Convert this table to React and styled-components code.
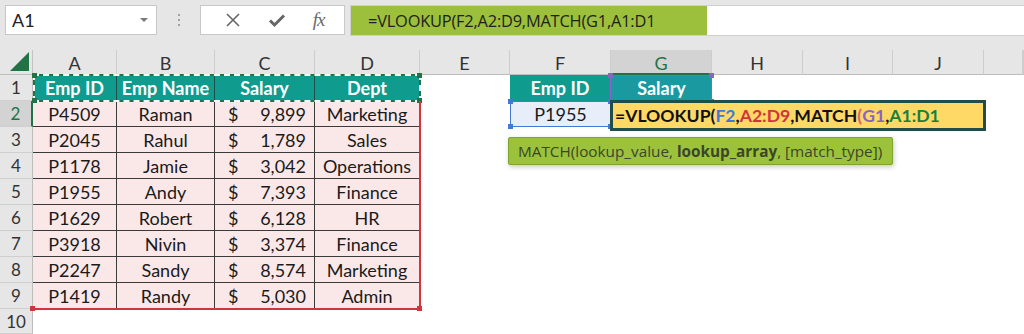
import React from 'react';
import styled, { createGlobalStyle } from 'styled-components';

const GlobalStyle = createGlobalStyle`
  html, body { margin: 0; padding: 0; background: #fff; }
  body { font-family: Lato, "Liberation Sans", sans-serif; overflow: hidden; }
  * { box-sizing: border-box; }
`;

const COLS = [33, 84, 98, 100, 105, 90, 101, 101, 91, 90, 91];
const LETTERS = ['A', 'B', 'C', 'D', 'E', 'F', 'G', 'H', 'I', 'J', ''];
const ACTIVE_COL = 'G';
const ACTIVE_ROW = 2;

const employees = [
  ['P4509', 'Raman', '9,899', 'Marketing'],
  ['P2045', 'Rahul', '1,789', 'Sales'],
  ['P1178', 'Jamie', '3,042', 'Operations'],
  ['P1955', 'Andy', '7,393', 'Finance'],
  ['P1629', 'Robert', '6,128', 'HR'],
  ['P3918', 'Nivin', '3,374', 'Finance'],
  ['P2247', 'Sandy', '8,574', 'Marketing'],
  ['P1419', 'Randy', '5,030', 'Admin'],
];

const Page = styled.div`
  width: 1024px;
  height: 334px;
  overflow: hidden;
  background: #fff;
`;

/* ---------- formula toolbar ---------- */
const Toolbar = styled.div`
  height: 50px;
  padding: 5px 0 0 5px;
  display: flex;
  align-items: flex-start;
  background: #e6e6e6;
`;

const NameBox = styled.div`
  width: 152px;
  height: 30px;
  background: #fff;
  border: 1px solid #c8c8c8;
  display: flex;
  align-items: center;
  justify-content: space-between;
  padding: 0 8px 0 6px;
  font-size: 18px;
  color: #222;
`;

const Caret = styled.span`
  width: 0;
  height: 0;
  border-left: 4px solid transparent;
  border-right: 4px solid transparent;
  border-top: 4px solid #7a7a7a;
`;

const Grip = styled.div`
  width: 43px;
  height: 30px;
  display: flex;
  flex-direction: column;
  align-items: center;
  justify-content: center;
  gap: 3px;
`;

const Dot = styled.span`
  width: 2px;
  height: 2px;
  background: #a0a0a0;
`;

const ButtonBox = styled.div`
  width: 145px;
  height: 30px;
  background: #fff;
  border: 1px solid #c8c8c8;
  display: flex;
  align-items: center;
  justify-content: space-around;
  padding: 0 6px 0 10px;
  margin-right: 5px;
`;

const Fx = styled.span`
  font-family: "Liberation Serif", "DejaVu Serif", serif;
  font-style: italic;
  font-size: 19px;
  color: #6a6a6a;
  letter-spacing: -1px;
`;

const FormulaBar = styled.div`
  flex: 1;
  height: 31px;
  background: #fff;
  border: 1px solid #cfcfcf;
  border-right: none;
  display: flex;
`;

const FormulaText = styled.div`
  width: 356px;
  height: 100%;
  background: #9cbf3c;
  padding-left: 17px;
  display: flex;
  align-items: center;
  font-family: "Open Sans", "Noto Sans", sans-serif;
  font-size: 16.4px;
  color: #1e1e1e;
  white-space: nowrap;
  letter-spacing: -0.2px;
`;

/* ---------- sheet grid ---------- */
const Sheet = styled.div`
  display: grid;
  grid-template-columns: ${COLS.map((w) => `${w}px`).join(' ')} 1fr;
  grid-template-rows: 25px repeat(9, 26px) 1fr;
  height: 284px;
  font-size: 18px;
`;

const Corner = styled.div`
  grid-row: 1;
  grid-column: 1;
  background: #e6e6e6;
  border-right: 1px solid #c4c4c4;
  border-bottom: 1px solid #bdbdbd;
  position: relative;
  &::after {
    content: '';
    position: absolute;
    right: 3px;
    bottom: 3px;
    width: 0;
    height: 0;
    border-left: 19px solid transparent;
    border-bottom: 19px solid #217346;
  }
`;

const ColHead = styled.div`
  grid-row: 1;
  grid-column: ${(p) => p.$c};
  background: ${(p) => (p.$active ? '#d3d3d3' : '#e6e6e6')};
  color: ${(p) => (p.$active ? '#217346' : '#333')};
  border-right: 1px solid #cdcdcd;
  border-bottom: ${(p) => (p.$active ? '2px solid #217346' : '1px solid #bdbdbd')};
  display: flex;
  align-items: center;
  justify-content: center;
  font-size: 18px;
  padding-top: 2px;
`;

const RowHead = styled.div`
  grid-row: ${(p) => p.$r};
  grid-column: 1;
  background: ${(p) => (p.$active ? '#d3d3d3' : '#e6e6e6')};
  color: ${(p) => (p.$active ? '#217346' : '#333')};
  border-bottom: 1px solid #cfcfcf;
  border-right: ${(p) => (p.$active ? '2px solid #217346' : '1px solid #bdbdbd')};
  display: flex;
  align-items: center;
  justify-content: center;
  font-size: 17px;
`;

const kinds = {
  head: 'background:#0f9c8e;color:#fff;font-weight:700;border-right:1px solid #1f4f4a;',
  headAlt: 'background:#1a99a1;color:#fff;font-weight:700;',
  data: 'background:#fae8e8;color:#1a1a1a;border-right:1px solid #3a3a3a;border-bottom:1px solid #3a3a3a;',
  lookup: 'background:#e8eef9;color:#1a1a1a;',
  blank: 'background:#fff;',
};

const Cell = styled.div`
  grid-row: ${(p) => p.$r};
  grid-column: ${(p) => p.$c};
  ${(p) => kinds[p.$kind]}
  display: flex;
  align-items: center;
  justify-content: ${(p) => (p.$money ? 'space-between' : 'center')};
  padding: ${(p) => (p.$money ? '0 8px 0 13px' : '0')};
  white-space: nowrap;
`;

/* ---------- overlays: ranges, editor, tooltip ---------- */
const Range = styled.div`
  grid-row: ${(p) => p.$r};
  grid-column: ${(p) => p.$c};
  margin: ${(p) => p.$m || '0'};
  border: ${(p) => p.$border};
  ${(p) => p.$edges}
  position: relative;
  pointer-events: none;
  z-index: 2;
`;

const Ants = styled(Range)`
  &::after {
    content: '';
    position: absolute;
    inset: -2px;
    border: 2px dashed rgba(255, 255, 255, 0.95);
  }
`;

const Handle = styled.span`
  position: absolute;
  width: 5px;
  height: 5px;
  background: ${(p) => p.$color};
  ${(p) => (p.$top ? 'top: -3px;' : 'bottom: -3px;')}
  ${(p) => (p.$left ? 'left: -3px;' : 'right: -3px;')}
  z-index: 3;
`;

const Editor = styled.div`
  grid-row: 3;
  grid-column: 8 / 12;
  margin: -1px -2px -4px -1px;
  background: #ffd966;
  border: 3px solid #1f4d4a;
  display: flex;
  align-items: center;
  padding-left: 2px;
  font-weight: 700;
  font-size: 17.6px;
  color: #111;
  white-space: nowrap;
  z-index: 4;
`;

const Ref = styled.span`
  color: ${(p) => p.$color};
`;

const Tip = styled.div`
  grid-row: 4 / 6;
  grid-column: 7 / 12;
  align-self: start;
  justify-self: start;
  margin: 10px 0 0 -2px;
  height: 28px;
  padding: 0 10px 0 9px;
  background: #9cc23c;
  border: 1px solid #7da42c;
  border-radius: 2px;
  box-shadow: 1px 2px 5px rgba(0, 0, 0, 0.22);
  display: flex;
  align-items: center;
  font-family: "Open Sans", "Noto Sans", sans-serif;
  font-size: 15.3px;
  color: #3b4628;
  white-space: nowrap;
  z-index: 5;
`;

function Corners({ color, only }) {
  const spots = only || ['tl', 'tr', 'bl', 'br'];
  return spots.map((s) => (
    <Handle key={s} $color={color} $top={s[0] === 't'} $left={s[1] === 'l'} />
  ));
}

export default function App() {
  return (
    <Page>
      <GlobalStyle />
      <Toolbar>
        <NameBox>
          A1
          <Caret />
        </NameBox>
        <Grip>
          <Dot />
          <Dot />
          <Dot />
        </Grip>
        <ButtonBox>
          <svg width="16" height="16" viewBox="0 0 16 16">
            <path d="M2 2 L14 14 M14 2 L2 14" stroke="#666" strokeWidth="1.6" />
          </svg>
          <svg width="18" height="16" viewBox="0 0 18 16">
            <path d="M2 8.5 L6.5 13 L16 3.5" stroke="#666" strokeWidth="3" fill="none" />
          </svg>
          <Fx>fx</Fx>
        </ButtonBox>
        <FormulaBar>
          <FormulaText>=VLOOKUP(F2,A2:D9,MATCH(G1,A1:D1</FormulaText>
        </FormulaBar>
      </Toolbar>

      <Sheet>
        <Corner />
        {LETTERS.map((l, i) => (
          <ColHead key={i} $c={i + 2} $active={l === ACTIVE_COL}>
            {l}
          </ColHead>
        ))}
        <ColHead $c={13} />
        {Array.from({ length: 10 }, (_, i) => (
          <RowHead key={i} $r={i + 2} $active={i + 1 === ACTIVE_ROW}>
            {i + 1}
          </RowHead>
        ))}

        {['Emp ID', 'Emp Name', 'Salary', 'Dept'].map((h, i) => (
          <Cell key={h} $r={2} $c={i + 2} $kind="head">
            {h}
          </Cell>
        ))}
        {employees.map((row, ri) =>
          row.map((v, ci) => (
            <Cell key={`${ri}-${ci}`} $r={ri + 3} $c={ci + 2} $kind="data" $money={ci === 2}>
              {ci === 2 ? (
                <>
                  <span>$</span>
                  <span>{v}</span>
                </>
              ) : (
                v
              )}
            </Cell>
          ))
        )}

        <Cell $r={2} $c={7} $kind="head">Emp ID</Cell>
        <Cell $r={2} $c={8} $kind="headAlt">Salary</Cell>
        <Cell $r={3} $c={7} $kind="lookup">P1955</Cell>

        <Ants $r={2} $c="2 / 6" $m="-1px -1px -1px 0" $border="2px solid #217346">
          <Corners color="#217346" />
        </Ants>
        <Range
          $r="3 / 11"
          $c="2 / 6"
          $m="0 -1px -1px 0"
          $border="none"
          $edges="border-right:2px solid #d2343f;border-bottom:2px solid #d2343f;"
        >
          <Corners color="#d2343f" only={['bl', 'br']} />
        </Range>
        <Range $r={2} $c={8} $m="0 0 -1px -1px" $border="1px solid #8a63c4">
          <Corners color="#8a63c4" />
        </Range>
        <Range $r={3} $c={7} $m="0 0 0 0" $border="1px solid #3f7ad8">
          <Corners color="#3f7ad8" />
        </Range>

        <Editor>
          =VLOOKUP(<Ref $color="#3f7ad8">F2</Ref>,<Ref $color="#d2343f">A2:D9</Ref>,MATCH
          <Ref $color="#e0606c">(</Ref>
          <Ref $color="#8a63c4">G1</Ref>,<Ref $color="#16803c">A1:D1</Ref>
        </Editor>

        <Tip>
          MATCH(lookup_value,&nbsp;<b>lookup_array</b>, [match_type])
        </Tip>
      </Sheet>
    </Page>
  );
}
